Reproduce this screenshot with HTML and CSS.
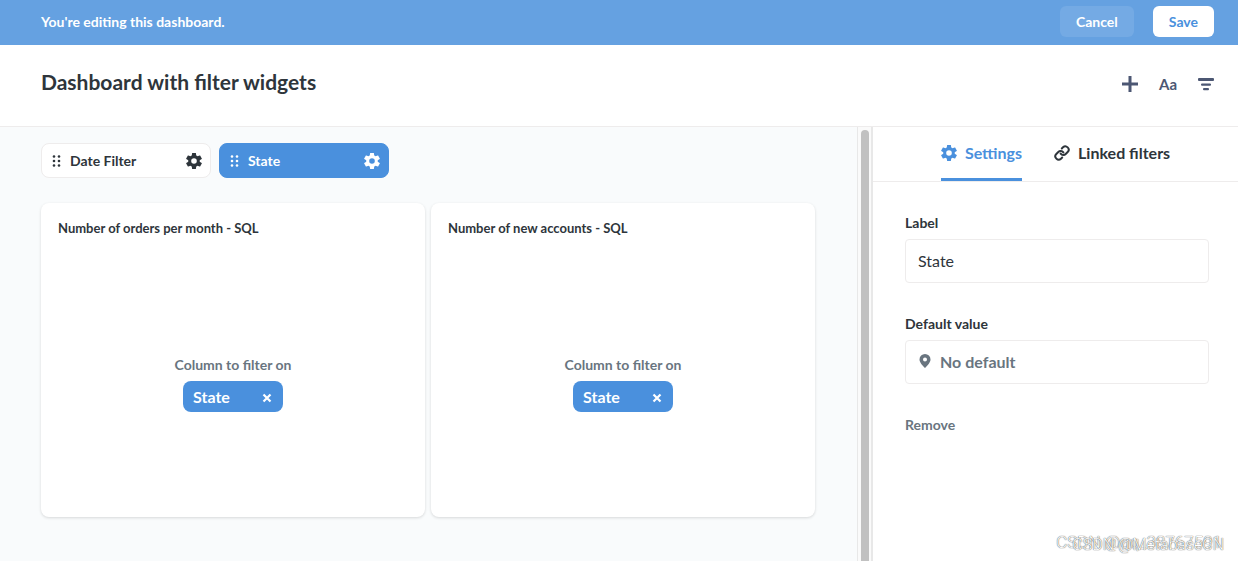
FILE: index.html
```
<!DOCTYPE html>
<html lang="en">
  <head>
    <meta charset="UTF-8" />
    <meta name="viewport" content="width=device-width, initial-scale=1.0" />
    <title>Dashboard with filter widgets</title>
    <link rel="stylesheet" href="styles.css">
  </head>
  <body>
    <svg class="sprite" aria-hidden="true">
      <symbol id="gear" viewBox="2 2 20 20">
        <path fill-rule="evenodd" d="M19.14 12.94c.04-.3.06-.61.06-.94 0-.32-.02-.64-.07-.94l2.53-1.58c.18-.14.23-.41.12-.61l-2.12-3.62c-.12-.22-.37-.29-.59-.22l-2.69 1.16c-.5-.38-1.03-.7-1.62-.94l-.36-2.84c-.04-.24-.24-.41-.48-.41h-3.84c-.24 0-.43.17-.47.41l-.36 2.84c-.59.24-1.13.57-1.62.94l-2.69-1.16c-.22-.08-.47 0-.59.22L2.22 8.87c-.12.21-.08.47.12.61l2.53 1.58c-.05.3-.09.63-.09.94s.02.64.07.94l-2.51 1.58c-.18.14-.23.41-.12.61l2.12 3.62c.12.22.37.29.59.22l2.69-1.16c.5.38 1.03.7 1.62.94l.36 2.84c.05.24.24.41.48.41h3.84c.24 0 .44-.17.47-.41l.36-2.84c.59-.24 1.13-.56 1.62-.94l2.69 1.16c.22.08.47 0 .59-.22l2.12-3.62c.12-.22.07-.47-.12-.61l-2.51-1.58zM12 15.5a3.5 3.5 0 1 1 0-7 3.5 3.5 0 0 1 0 7z" />
      </symbol>
      <symbol id="grabber" viewBox="0 0 9 12">
        <circle cx="2" cy="1.5" r="1.3" /><circle cx="7" cy="1.5" r="1.3" />
        <circle cx="2" cy="6" r="1.3" /><circle cx="7" cy="6" r="1.3" />
        <circle cx="2" cy="10.5" r="1.3" /><circle cx="7" cy="10.5" r="1.3" />
      </symbol>
      <symbol id="close" viewBox="0 0 10 10">
        <path d="M1.5 1.5l7 7M8.5 1.5l-7 7" fill="none" stroke="currentColor" stroke-width="2.200" />
      </symbol>
    </svg>

    <div class="edit-bar">
      <span>You're editing this dashboard.</span>
      <div class="edit-actions">
        <button class="btn cancel">Cancel</button>
        <button class="btn save">Save</button>
      </div>
    </div>

    <header class="header">
      <h1>Dashboard with filter widgets</h1>
      <div class="tools">
        <button class="tool" aria-label="Add a question">
          <svg width="16" height="16" viewBox="0 0 16 16"><path d="M6.5 0h3v6.5H16v3H9.5V16h-3V9.500H0v-3h6.500z" /></svg>
        </button>
        <button class="tool">Aa</button>
        <button class="tool" aria-label="Add a filter">
          <svg width="16" height="14" viewBox="0 0 16 14">
            <rect x="0" y="1" width="16" height="3" rx="1" />
            <rect x="3" y="6.5" width="10" height="2.200" rx="1" />
            <rect x="5" y="11" width="6" height="2.200" rx="1" />
          </svg>
        </button>
      </div>
    </header>

    <div class="content">
      <main class="board">
        <div class="filters">
          <button class="filter">
            <svg class="grabber"><use href="#grabber" /></svg>
            <span>Date Filter</span>
            <svg class="gear"><use href="#gear" /></svg>
          </button>
          <button class="filter selected">
            <svg class="grabber"><use href="#grabber" /></svg>
            <span>State</span>
            <svg class="gear"><use href="#gear" /></svg>
          </button>
        </div>

        <div class="cards">
          <section class="card">
            <h2>Number of orders per month - SQL</h2>
            <div class="mapping">
              <span>Column to filter on</span>
              <button class="column">State <svg class="close"><use href="#close" /></svg></button>
            </div>
          </section>
          <section class="card">
            <h2>Number of new accounts - SQL</h2>
            <div class="mapping">
              <span>Column to filter on</span>
              <button class="column">State <svg class="close"><use href="#close" /></svg></button>
            </div>
          </section>
        </div>
      </main>

      <div class="scrollbar"><div class="thumb"></div></div>

      <aside class="sidebar">
        <nav class="tabs">
          <button class="tab active">
            <svg class="gear"><use href="#gear" /></svg>
            Settings
          </button>
          <button class="tab">
            <svg class="link" viewBox="0 0 24 24">
              <path d="M10 13a5 5 0 0 0 7.540.540l3-3a5 5 0 0 0-7.070-7.070l-1.720 1.710" />
              <path d="M14 11a5 5 0 0 0-7.540-.540l-3 3a5 5 0 0 0 7.070 7.070l1.710-1.710" />
            </svg>
            Linked filters
          </button>
        </nav>
        <form class="settings">
          <label for="filter-label">Label</label>
          <input type="text" id="filter-label" class="field" value="State" />
          <label for="default-value">Default value</label>
          <button type="button" id="default-value" class="field default-value">
            <svg width="12" height="14" viewBox="0 0 12 14">
              <path fill-rule="evenodd" d="M6 0a5.5 5.5 0 0 1 5.5 5.5C11.5 8.5 8 12 6 14 4 12 .5 8.5.5 5.5A5.5 5.5 0 0 1 6 0zm0 3.5a2 2 0 1 0 0 4 2 2 0 0 0 0-4z" />
            </svg>
            No default
          </button>
          <button type="button" class="remove">Remove</button>
        </form>
      </aside>
    </div>

    <div class="watermark">CSDN @qq_38767591</div>
    <div class="watermark second">CSDN @MetabaseCN</div>
  </body>
</html>
```
FILE: styles.css
```
* {
  box-sizing: border-box;
}

body {
  display: flex;
  flex-direction: column;
  min-height: 100vh;
  margin: 0;
  font-family: Lato, sans-serif;
  font-size: 14px;
  font-weight: 700;
  color: #2e353b;
  background-color: #fff;
}

button {
  padding: 0;
  border: none;
  background: none;
  font: inherit;
  color: inherit;
  cursor: pointer;
}

svg {
  flex: none;
  fill: currentColor;
}

h1,
h2 {
  margin: 0;
}

.sprite {
  position: absolute;
  width: 0;
  height: 0;
}

.edit-bar {
  display: flex;
  align-items: center;
  justify-content: space-between;
  height: 45px;
  padding: 0 24px 2px 41px;
  background-color: #65a1e1;
  color: #fff;
}

.edit-actions {
  display: flex;
  gap: 19px;
}

.btn {
  height: 31px;
  padding: 0 16px;
  border-radius: 6px;
}

.cancel {
  background-color: #74aae4;
}

.save {
  background-color: #fff;
  color: #4a90dd;
}

.header {
  display: flex;
  align-items: center;
  justify-content: space-between;
  height: 82px;
  padding: 0 24px 8px 41px;
  border-bottom: 1px solid #eeecec;
}

h1 {
  font-size: 21px;
}

.tools {
  display: flex;
  align-items: center;
  gap: 21px;
  color: #4c5773;
}

.tool {
  display: flex;
  padding-top: 4px;
  font-size: 15px;
}

.content {
  display: flex;
  flex: 1;
}

.board {
  display: flex;
  flex: 1;
  flex-direction: column;
  padding: 16px 42px 44px 41px;
  background-color: #f9fbfc;
}

.filters {
  display: flex;
  gap: 8px;
  margin-bottom: 25px;
}

.filter {
  display: flex;
  align-items: center;
  width: 170px;
  height: 35px;
  padding: 0 8px 0 10px;
  border: 1px solid #eeecec;
  border-radius: 8px;
  background-color: #fff;
}

.filter span {
  flex: 1;
  margin-left: 9px;
  text-align: left;
}

.filter.selected {
  border-color: #4a90dd;
  background-color: #4a90dd;
  color: #fff;
}

.grabber {
  width: 9px;
  height: 12px;
}

.gear,
.link {
  width: 16px;
  height: 16px;
}

.link {
  fill: none;
  stroke: currentColor;
  stroke-width: 3;
  stroke-linecap: round;
}

.cards {
  display: grid;
  flex: 1;
  grid-template-columns: 1fr 1fr;
  gap: 6px;
}

.card {
  display: flex;
  flex-direction: column;
  padding: 17px;
  border-radius: 8px;
  background-color: #fff;
  box-shadow: 0 1px 3px rgba(0, 0, 0, 0.14);
}

.card h2 {
  font-size: 13px;
  line-height: 16px;
}

.mapping {
  display: flex;
  flex: 1;
  flex-direction: column;
  align-items: center;
  justify-content: center;
  gap: 8px;
  padding-top: 32px;
  color: #69757f;
}

.mapping span {
  line-height: 16px;
}

.column {
  display: flex;
  align-items: center;
  justify-content: space-between;
  width: 100px;
  height: 31px;
  padding: 0 11px 0 10px;
  border-radius: 8px;
  background-color: #4a90dd;
  color: #fff;
  font-size: 16px;
}

.close {
  width: 10px;
  height: 10px;
  margin-top: 3px;
}

.scrollbar {
  width: 16px;
  padding: 3px 3px 0;
  border: solid #e8e8e8;
  border-width: 0 2px 0 1px;
  background-color: #fafafa;
}

.thumb {
  width: 8px;
  height: 100%;
  border-radius: 4px 4px 0 0;
  background-color: #c1c1c1;
}

.sidebar {
  width: 365px;
}

.tabs {
  display: flex;
  justify-content: center;
  gap: 32px;
  height: 55px;
  padding: 0 32px;
  border-bottom: 1px solid #eeecec;
}

.tab {
  display: flex;
  align-items: center;
  gap: 8px;
  border-bottom: 3px solid transparent;
  font-size: 16px;
}

.tab.active {
  border-bottom-color: #4a90dd;
  color: #4a90dd;
}

.settings {
  display: flex;
  flex-direction: column;
  padding: 33px 29px 0 32px;
}

.settings label {
  margin-bottom: 8px;
  line-height: 16px;
}

.field {
  width: 100%;
  height: 44px;
  margin-bottom: 33px;
  padding: 0 12px 2px;
  border: 1px solid #eeecec;
  border-radius: 4px;
  font-family: inherit;
  font-size: 16px;
  color: #2e353b;
}

.default-value {
  display: flex;
  align-items: center;
  gap: 9px;
  padding-left: 13px;
  color: #69757f;
}

.remove {
  align-self: flex-start;
  line-height: 16px;
  color: #69757f;
}

/* laid over the page corner */
.watermark {
  position: absolute;
  right: 16px;
  bottom: 9px;
  font-family: Roboto, sans-serif;
  font-size: 17px;
  font-weight: 300;
  color: #fff;
  text-shadow: 0 0 1px #555, 0 0 1px #888;
  pointer-events: none;
}

.watermark.second {
  right: 14px;
  bottom: 7px;
  font-size: 16px;
}
```
